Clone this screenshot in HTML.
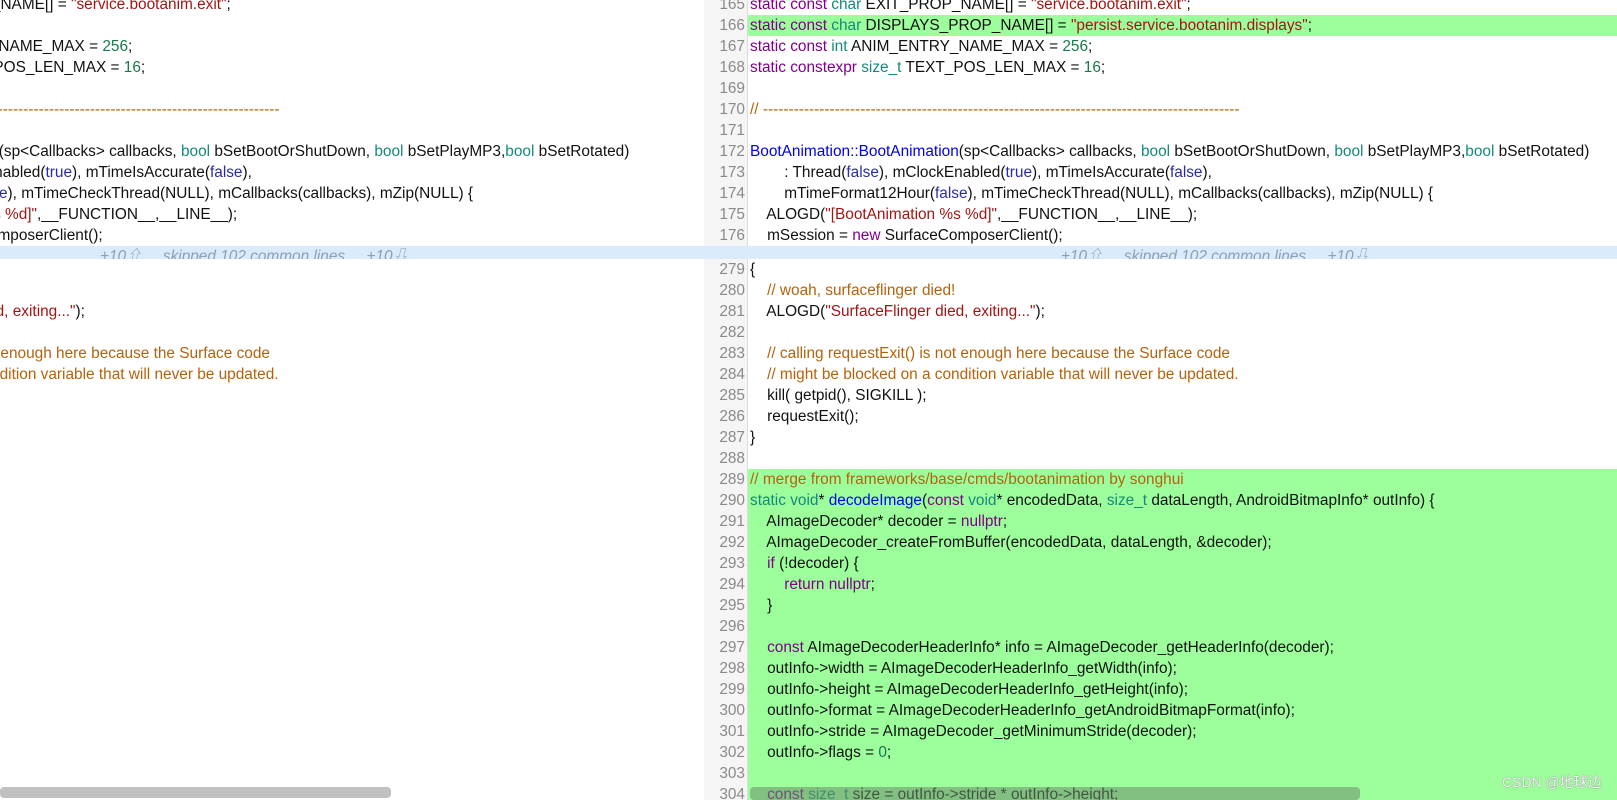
<!DOCTYPE html>
<html><head><meta charset="utf-8"><style>
*{margin:0;padding:0;box-sizing:border-box}
body{width:1617px;height:800px;overflow:hidden;background:#fff;font-family:"Liberation Sans","Noto Sans CJK SC",sans-serif;font-size:15.4px;color:#111;position:relative}
.pane{position:absolute;top:0;height:800px;overflow:hidden}
#L{left:0;width:704px}
#R{left:704px;width:913px}
.gut{position:absolute;left:0;top:0;width:44px;height:800px;background:#f5f5f5;border-right:1px solid #dcdcdc}
.code{position:absolute;top:-6px;line-height:21px}
#L .code{left:-256px;width:1500px}
#R .code{left:0;width:913px}
.r{height:21px;display:flex;white-space:pre;overflow:hidden}
.n{width:44px;text-align:right;color:#8a8a8a;padding-right:3px;flex:none}
.t{padding-left:2px;flex:1;white-space:pre}
#L .t{padding-left:46px}
.g{background:#9cff9c}
.band{height:13px;background:#dcebfb;overflow:hidden;line-height:21px;color:#8aa0b8;font-style:italic;white-space:pre}
.k{color:#80008a}.ty{color:#14897a}.f{color:#0000f0}.s{color:#a31515}.c{color:#b4630c}.nu{color:#1a7a4a}.b{color:#2b2ba8}
.sb{position:absolute;border-radius:4px}
</style></head><body>
<div class="pane" id="L"><div class="code"><div class="r"><span class="t"><span class="k">static const</span> <span class="ty">char</span> EXIT_PROP_NAME[] = <span class="s">"service.bootanim.exit"</span>;</span></div><div class="r"><span class="t"> </span></div><div class="r"><span class="t"><span class="k">static const</span> <span class="ty">int</span> ANIM_ENTRY_NAME_MAX = <span class="nu">256</span>;</span></div><div class="r"><span class="t"><span class="k">static constexpr</span> <span class="ty">size_t</span> TEXT_POS_LEN_MAX = <span class="nu">16</span>;</span></div><div class="r"><span class="t"> </span></div><div class="r"><span class="t"><span class="c">// ---------------------------------------------------------------------------------------------</span></span></div><div class="r"><span class="t"> </span></div><div class="r"><span class="t"><span class="f">BootAnimation::BootAnimation</span>(sp&lt;Callbacks&gt; callbacks, <span class="ty">bool</span> bSetBootOrShutDown, <span class="ty">bool</span> bSetPlayMP3,<span class="ty">bool</span> bSetRotated)</span></div><div class="r"><span class="t">        : Thread(<span class="b">false</span>), mClockEnabled(<span class="b">true</span>), mTimeIsAccurate(<span class="b">false</span>),</span></div><div class="r"><span class="t">        mTimeFormat12Hour(<span class="b">false</span>), mTimeCheckThread(NULL), mCallbacks(callbacks), mZip(NULL) {</span></div><div class="r"><span class="t">    ALOGD(<span class="s">"[BootAnimation %s %d]"</span>,__FUNCTION__,__LINE__);</span></div><div class="r"><span class="t">    mSession = <span class="k">new</span> SurfaceComposerClient();</span></div><div class="band" style="padding-left:356px">+10⇧     skipped 102 common lines     +10⇩</div><div class="r"><span class="t">{</span></div><div class="r"><span class="t">    <span class="c">// woah, surfaceflinger died!</span></span></div><div class="r"><span class="t">    ALOGD(<span class="s">"SurfaceFlinger died, exiting..."</span>);</span></div><div class="r"><span class="t"> </span></div><div class="r"><span class="t">    <span class="c">// calling requestExit() is not enough here because the Surface code</span></span></div><div class="r"><span class="t">    <span class="c">// might be blocked on a condition variable that will never be updated.</span></span></div><div class="r"><span class="t">    kill( getpid(), SIGKILL );</span></div><div class="r"><span class="t">    requestExit();</span></div><div class="r"><span class="t">}</span></div></div>
<div class="sb" style="left:0;top:787px;width:391px;height:11px;background:#c1c1c1"></div>
</div>

<div class="pane" id="R"><div class="gut"></div><div class="code"><div class="r"><span class="n">165</span><span class="t"><span class="k">static const</span> <span class="ty">char</span> EXIT_PROP_NAME[] = <span class="s">"service.bootanim.exit"</span>;</span></div><div class="r"><span class="n">166</span><span class="t g"><span class="k">static const</span> <span class="ty">char</span> DISPLAYS_PROP_NAME[] = <span class="s">"persist.service.bootanim.displays"</span>;</span></div><div class="r"><span class="n">167</span><span class="t"><span class="k">static const</span> <span class="ty">int</span> ANIM_ENTRY_NAME_MAX = <span class="nu">256</span>;</span></div><div class="r"><span class="n">168</span><span class="t"><span class="k">static constexpr</span> <span class="ty">size_t</span> TEXT_POS_LEN_MAX = <span class="nu">16</span>;</span></div><div class="r"><span class="n">169</span><span class="t"> </span></div><div class="r"><span class="n">170</span><span class="t"><span class="c">// ---------------------------------------------------------------------------------------------</span></span></div><div class="r"><span class="n">171</span><span class="t"> </span></div><div class="r"><span class="n">172</span><span class="t"><span class="f">BootAnimation::BootAnimation</span>(sp&lt;Callbacks&gt; callbacks, <span class="ty">bool</span> bSetBootOrShutDown, <span class="ty">bool</span> bSetPlayMP3,<span class="ty">bool</span> bSetRotated)</span></div><div class="r"><span class="n">173</span><span class="t">        : Thread(<span class="b">false</span>), mClockEnabled(<span class="b">true</span>), mTimeIsAccurate(<span class="b">false</span>),</span></div><div class="r"><span class="n">174</span><span class="t">        mTimeFormat12Hour(<span class="b">false</span>), mTimeCheckThread(NULL), mCallbacks(callbacks), mZip(NULL) {</span></div><div class="r"><span class="n">175</span><span class="t">    ALOGD(<span class="s">"[BootAnimation %s %d]"</span>,__FUNCTION__,__LINE__);</span></div><div class="r"><span class="n">176</span><span class="t">    mSession = <span class="k">new</span> SurfaceComposerClient();</span></div><div class="band" style="padding-left:357px">+10⇧     skipped 102 common lines     +10⇩</div><div class="r"><span class="n">279</span><span class="t">{</span></div><div class="r"><span class="n">280</span><span class="t">    <span class="c">// woah, surfaceflinger died!</span></span></div><div class="r"><span class="n">281</span><span class="t">    ALOGD(<span class="s">"SurfaceFlinger died, exiting..."</span>);</span></div><div class="r"><span class="n">282</span><span class="t"> </span></div><div class="r"><span class="n">283</span><span class="t">    <span class="c">// calling requestExit() is not enough here because the Surface code</span></span></div><div class="r"><span class="n">284</span><span class="t">    <span class="c">// might be blocked on a condition variable that will never be updated.</span></span></div><div class="r"><span class="n">285</span><span class="t">    kill( getpid(), SIGKILL );</span></div><div class="r"><span class="n">286</span><span class="t">    requestExit();</span></div><div class="r"><span class="n">287</span><span class="t">}</span></div><div class="r"><span class="n">288</span><span class="t"> </span></div><div class="r"><span class="n">289</span><span class="t g"><span class="c">// merge from frameworks/base/cmds/bootanimation by songhui</span></span></div><div class="r"><span class="n">290</span><span class="t g"><span class="ty">static void</span>* <span class="f">decodeImage</span>(<span class="k">const</span> <span class="ty">void</span>* encodedData, <span class="ty">size_t</span> dataLength, AndroidBitmapInfo* outInfo) {</span></div><div class="r"><span class="n">291</span><span class="t g">    AImageDecoder* decoder = <span class="k">nullptr</span>;</span></div><div class="r"><span class="n">292</span><span class="t g">    AImageDecoder_createFromBuffer(encodedData, dataLength, &amp;decoder);</span></div><div class="r"><span class="n">293</span><span class="t g">    <span class="k">if</span> (!decoder) {</span></div><div class="r"><span class="n">294</span><span class="t g">        <span class="k">return nullptr</span>;</span></div><div class="r"><span class="n">295</span><span class="t g">    }</span></div><div class="r"><span class="n">296</span><span class="t g"> </span></div><div class="r"><span class="n">297</span><span class="t g">    <span class="k">const</span> AImageDecoderHeaderInfo* info = AImageDecoder_getHeaderInfo(decoder);</span></div><div class="r"><span class="n">298</span><span class="t g">    outInfo-&gt;width = AImageDecoderHeaderInfo_getWidth(info);</span></div><div class="r"><span class="n">299</span><span class="t g">    outInfo-&gt;height = AImageDecoderHeaderInfo_getHeight(info);</span></div><div class="r"><span class="n">300</span><span class="t g">    outInfo-&gt;format = AImageDecoderHeaderInfo_getAndroidBitmapFormat(info);</span></div><div class="r"><span class="n">301</span><span class="t g">    outInfo-&gt;stride = AImageDecoder_getMinimumStride(decoder);</span></div><div class="r"><span class="n">302</span><span class="t g">    outInfo-&gt;flags = <span class="nu">0</span>;</span></div><div class="r"><span class="n">303</span><span class="t g"> </span></div><div class="r"><span class="n">304</span><span class="t g">    <span class="k">const</span> <span class="ty">size_t</span> size = outInfo-&gt;stride * outInfo-&gt;height;</span></div></div>
<div class="sb" style="left:46px;top:787px;width:610px;height:13px;background:rgba(110,140,110,0.55)"></div>
<div style="position:absolute;left:798px;top:772px;font-size:14px;color:#f2f6f2;text-shadow:0 0 1px #888,0 0 1px #888">CSDN @地球边</div>
</div>
</body></html>
